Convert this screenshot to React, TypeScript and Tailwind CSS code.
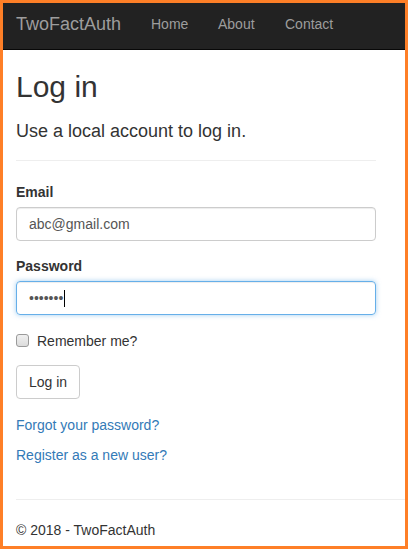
import React from "react";

export default function App() {
  const font = { fontFamily: '"Liberation Sans", Arial, Helvetica, sans-serif' };
  return (
    <div
      style={font}
      className="w-[408px] h-[549px] border-[3px] border-[#fe7f27] bg-white flex flex-col overflow-hidden text-[14px] leading-[20px] text-[#333]"
    >
      <nav className="h-[47px] shrink-0 bg-[#222] border-b border-[#080808] flex items-start pt-[11px] pl-[13px] text-[#9d9d9d]">
        <div className="w-[135px] text-[18px] leading-[20px]">TwoFactAuth</div>
        <div className="w-[67px]">Home</div>
        <div className="w-[67px]">About</div>
        <div>Contact</div>
      </nav>

      <main className="pl-[13px] flex flex-col flex-1">
        <div className="w-[360px] flex flex-col">
          <h2 className="mt-[20px] text-[30px] leading-[33px] font-medium">Log in</h2>
          <h4 className="mt-[18px] text-[18px] leading-[20px]">Use a local account to log in.</h4>
          <div className="mt-[19px] h-px bg-[#eee]" />

          <label className="mt-[21px] font-bold">Email</label>
          <div className="mt-[5px] h-[34px] border border-[#ccc] rounded-[4px] flex items-center px-[12px] text-[#555] shadow-[inset_0_1px_1px_rgba(0,0,0,0.075)]">
            abc@gmail.com
          </div>

          <label className="mt-[15px] font-bold">Password</label>
          <div className="mt-[5px] h-[34px] border border-[#66afe9] rounded-[4px] flex items-center px-[12px] text-[#555] shadow-[inset_0_1px_1px_rgba(0,0,0,0.075),0_0_5px_rgba(102,175,233,0.6)]">
            <span className="tracking-[0px]">•••••••</span>
            <span className="inline-block w-px h-[17px] bg-black ml-px" />
          </div>

          <div className="mt-[16px] flex items-start">
            <div className="mt-[3px] w-[13px] h-[13px] rounded-[3px] border border-[#9a9a9a] bg-gradient-to-b from-[#f0f0f0] to-[#dcdcdc]" />
            <span className="ml-[8px]">Remember me?</span>
          </div>

          <div className="mt-[14px]">
            <div className="inline-flex items-center h-[34px] w-[64px] justify-center border border-[#ccc] rounded-[4px] bg-white">
              Log in
            </div>
          </div>

          <a className="mt-[16px] text-[#337ab7]">Forgot your password?</a>
          <a className="mt-[10px] text-[#337ab7]">Register as a new user?</a>
        </div>

        <div className="mt-[34px] h-px bg-[#eee]" />
        <footer className="mt-[20px]">© 2018 - TwoFactAuth</footer>
      </main>
    </div>
  );
}
